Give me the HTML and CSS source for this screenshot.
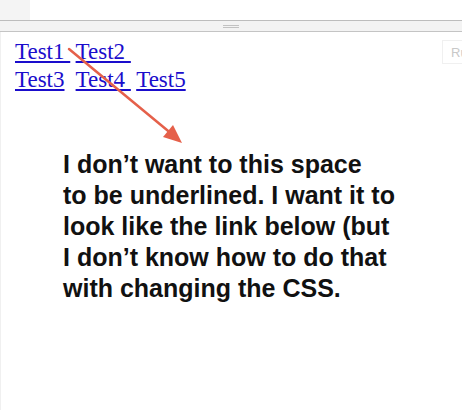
FILE: index.html
```html
<!DOCTYPE html>
<html lang="en">
<head>
    <meta charset="UTF-8">
    <meta name="viewport" content="width=device-width, initial-scale=1.0">
    <title>Link underline</title>
    <link rel="stylesheet" href="styles.css">
</head>
<body>
    <!-- Editor pane (mostly cut off) -->
    <div class="editor">
        <div class="editor-gutter"></div>
    </div>

    <!-- Drag handle between panes -->
    <div class="splitter">
        <span class="grip"></span>
    </div>

    <!-- Result pane -->
    <div class="result">
        <button class="run">Run</button>

        <div class="links">
            <a href="#">Test1&nbsp;</a> <a href="#">Test2&nbsp;</a><br>
            <a href="#">Test3</a>&nbsp; <a href="#">Test4&nbsp;</a> <a href="#">Test5</a>
        </div>

        <p class="note">
            I don’t want to this space<br>
            to be underlined. I want it to<br>
            look like the link below (but<br>
            I don’t know how to do that<br>
            with changing the CSS.
        </p>

        <!-- Annotation arrow pointing at the underlined space -->
        <svg class="arrow" width="200" height="130" viewBox="0 0 200 130">
            <line x1="68" y1="17" x2="172" y2="103" stroke="#e5604a" stroke-width="2.5" stroke-linecap="round"/>
            <polygon points="181,111 162,105 172,93" fill="#e5604a"/>
        </svg>
    </div>
</body>
</html>
```

FILE: styles.css
```css
body {
    margin: 0;
    background-color: #ffffff;
    font-family: "Liberation Serif", "Times New Roman", serif;
    overflow: hidden;
}

.editor {
    height: 20px;
    background-color: #ffffff;
}

.editor-gutter {
    width: 30px;
    height: 20px;
    background-color: #f4f4f4;
}

.splitter {
    height: 10px;
    border-top: 1px solid #bdbdbd;
    border-bottom: 1px solid #c4c4c4;
    background-color: #f3f3f3;
    display: flex;
    justify-content: center;
    align-items: center;
}

.grip {
    width: 16px;
    height: 1px;
    border-top: 1px solid #c2c2c2;
    border-bottom: 1px solid #c2c2c2;
}

.result {
    position: relative;
    height: 378px;
    border-left: 1px solid #f0f0f0;
    padding: 6px 0 0 14px;
    box-sizing: border-box;
}

.links {
    font-size: 23px;
    line-height: 28px;
}

.links a {
    color: #1a0dcc;
}

.note {
    margin: 55px 0 0 48px;
    font-family: "Liberation Sans", Arial, sans-serif;
    font-weight: bold;
    font-size: 25px;
    line-height: 31px;
    color: #111111;
    white-space: nowrap;
}

.run {
    position: absolute;
    top: 8px;
    right: -12px;
    width: 32px;
    height: 24px;
    padding: 0 0 0 8px;
    text-align: left;
    border: 1px solid #f0f0f0;
    background-color: #ffffff;
    color: #c8c8c8;
    font-family: "Liberation Sans", Arial, sans-serif;
    font-size: 13px;
}

.arrow {
    position: absolute;
    top: 0;
    left: 0;
    pointer-events: none;
}
```
